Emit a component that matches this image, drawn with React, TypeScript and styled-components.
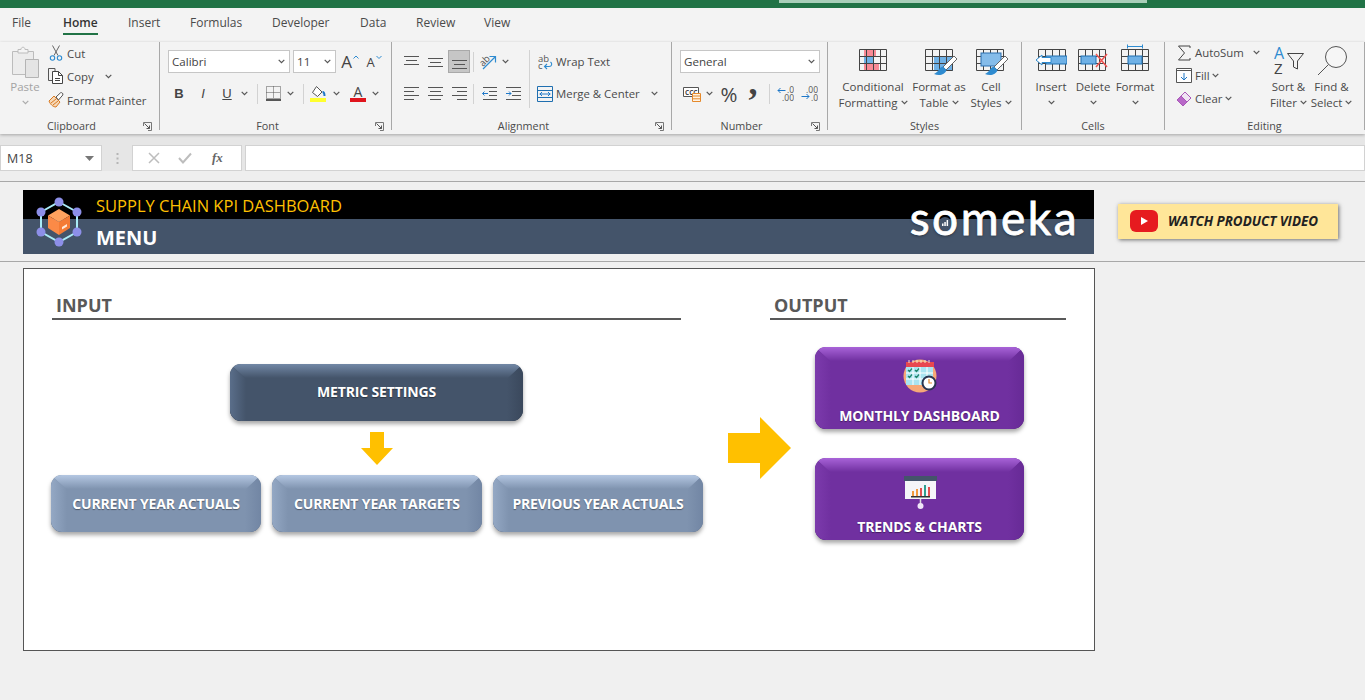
import React from "react";
import styled, { createGlobalStyle } from "styled-components";

const GlobalStyle = createGlobalStyle`
  html, body {
    margin: 0;
    height: 700px;
    overflow: hidden;
    background: #f0f0f0;
    font-family: "Open Sans", "Liberation Sans", sans-serif;
  }
  * { box-sizing: border-box; }
`;

const TitleBar = styled.div`
  height: 8px;
  background: #217346;
`;

const TitleSelection = styled.div`
  width: 368px;
  height: 3px;
  margin-left: 779px;
  background: #a9cfb9;
`;

const TabRow = styled.div`
  display: flex;
  height: 34px;
  padding-left: 12px;
  background: #f3f3f3;
`;

const Tab = styled.div<{ $w: number; $active?: boolean }>`
  width: ${(p) => p.$w}px;
  height: 34px;
  font-size: 12px;
  line-height: 30px;
  color: ${(p) => (p.$active ? "#333" : "#4a4a4a")};
  font-weight: ${(p) => (p.$active ? 600 : 400)};
  span {
    display: inline-block;
    height: 27px;
    border-bottom: ${(p) => (p.$active ? "2px solid #217346" : "0")};
  }
`;

const Ribbon = styled.div`
  position: relative;
  display: flex;
  height: 92px;
  background: #f3f3f3;
  box-shadow: 0 1px 3px rgba(0, 0, 0, 0.28);
`;

const Group = styled.div<{ $w: number }>`
  display: flex;
  flex-direction: column;
  flex: none;
  width: ${(p) => p.$w}px;
  height: 88px;
  border-right: 1px solid #a8a8a8;
`;

const GroupBody = styled.div<{ $pl?: number; $pt?: number }>`
  display: flex;
  flex: none;
  height: 76px;
  padding-left: ${(p) => p.$pl ?? 0}px;
  padding-top: ${(p) => p.$pt ?? 0}px;
`;

const GroupLabel = styled.div<{ $launcher?: boolean }>`
  display: grid;
  grid-template-columns: 1fr ${(p) => (p.$launcher ? "16px" : "0")};
  flex: none;
  height: 16px;
  align-items: center;
  font-size: 10.8px;
  line-height: 16px;
  color: #4a4a4a;
  text-align: center;
  svg { display: block; }
`;

const Stack = styled.div<{ $gap?: number; $w?: number }>`
  display: flex;
  flex-direction: column;
  flex: none;
  width: ${(p) => (p.$w ? `${p.$w}px` : "auto")};
  gap: ${(p) => p.$gap ?? 0}px;
`;

const Row = styled.div<{ $h?: number }>`
  display: flex;
  align-items: center;
  height: ${(p) => p.$h ?? 23}px;
`;

const Slot = styled.div<{ $w: number; $ml?: number }>`
  display: flex;
  align-items: center;
  justify-content: center;
  flex: none;
  width: ${(p) => p.$w}px;
  margin-left: ${(p) => p.$ml ?? 0}px;
  height: 100%;
  color: #444;
  svg { display: block; flex: none; }
`;

const SelectedSlot = styled(Slot)`
  height: 23px;
  margin: 0 1px;
  background: #c6c6c6;
  border: 1px solid #a9a9a9;
`;

const Sep = styled.div<{ $l: number; $r: number; $h?: number }>`
  flex: none;
  width: 1px;
  height: ${(p) => p.$h ?? 20}px;
  margin: 0 ${(p) => p.$r}px 0 ${(p) => p.$l}px;
  background: #d2d2d2;
`;

const Combo = styled.div<{ $w: number; $mr?: number }>`
  display: flex;
  align-items: center;
  justify-content: space-between;
  width: ${(p) => p.$w}px;
  height: 23px;
  margin-right: ${(p) => p.$mr ?? 0}px;
  padding: 0 4px 0 3px;
  background: #fff;
  border: 1px solid #c6c6c6;
  font-size: 11.6px;
  color: #444;
`;

const SmallText = styled.span<{ $ml?: number }>`
  font-size: 11.4px;
  color: #4a4a4a;
  white-space: nowrap;
  margin-left: ${(p) => p.$ml ?? 0}px;
  flex: none;
`;

const IconBox = styled.div<{ $w: number }>`
  display: flex;
  align-items: center;
  justify-content: center;
  flex: none;
  width: ${(p) => p.$w}px;
  svg { display: block; }
`;

const PasteButton = styled.div`
  display: flex;
  flex-direction: column;
  align-items: center;
  width: 34px;
  margin-right: 6px;
  padding-top: 4px;
  font-size: 11.5px;
  color: #a3a3a3;
  span { line-height: 16px; margin-top: 1px; }
  svg { display: block; }
  svg + span + svg { margin-top: 5px; }
`;

const BigButton = styled.div<{ $w: number }>`
  display: flex;
  flex-direction: column;
  align-items: center;
  flex: none;
  width: ${(p) => p.$w}px;
`;

const BigIcon = styled.div<{ $pt?: number; $pl?: number }>`
  display: flex;
  align-items: flex-start;
  justify-content: center;
  height: 36px;
  padding-top: ${(p) => p.$pt ?? 7}px;
  padding-left: ${(p) => p.$pl ?? 0}px;
  svg { display: block; }
`;

const BigLine = styled.div`
  display: flex;
  align-items: center;
  justify-content: center;
  gap: 3px;
  height: 16px;
  font-size: 11.5px;
  color: #4a4a4a;
  white-space: nowrap;
`;

const Glyph = styled.span<{ $weight?: number; $italic?: boolean; $u?: boolean }>`
  font-family: "Liberation Sans", sans-serif;
  font-size: 13px;
  font-weight: ${(p) => p.$weight ?? 400};
  font-style: ${(p) => (p.$italic ? "italic" : "normal")};
  text-decoration: ${(p) => (p.$u ? "underline" : "none")};
  color: #444;
`;

const PercentGlyph = styled.span`
  font-size: 20.500px;
  line-height: 20px;
  color: #444;
`;

const CommaGlyph = styled.span`
  font-family: "Liberation Serif", serif;
  font-size: 36px;
  font-weight: 700;
  line-height: 20px;
  margin-top: -24px;
  color: #444;
`;

const GrowGlyph = styled.div<{ $size: number }>`
  display: flex;
  align-items: flex-start;
  gap: 1px;
  font-size: ${(p) => p.$size}px;
  color: #444;
  line-height: 20px;
  svg { margin-top: 3px; }
`;

const FormulaBar = styled.div`
  display: flex;
  align-items: center;
  height: 48px;
  padding-top: 3px;
  background: linear-gradient(#e6e6e6 0 37px, #eeeeee 37px);
  border-bottom: 1px solid #a8a8a8;
`;

const NameBox = styled.div`
  display: flex;
  align-items: center;
  justify-content: space-between;
  width: 102px;
  height: 26px;
  padding: 0 7px 0 6px;
  margin-bottom: 2px;
  background: #fff;
  border: 1px solid #d2d2d2;
  font-size: 12.5px;
  color: #444;
`;

const GripDots = styled.div`
  width: 30px;
  display: flex;
  justify-content: center;
  margin-bottom: 2px;
`;

const FnBox = styled.div`
  display: flex;
  align-items: center;
  justify-content: space-around;
  width: 110px;
  height: 26px;
  padding: 0 6px;
  margin-right: 3px;
  margin-bottom: 2px;
  background: #fff;
  border: 1px solid #d2d2d2;
`;

const FormulaInput = styled.div`
  flex: 1;
  height: 26px;
  margin-bottom: 2px;
  background: #fff;
  border: 1px solid #d2d2d2;
`;

const HeaderStrip = styled.div`
  display: flex;
  align-items: flex-start;
  height: 80px;
  padding: 8px 0 0 23px;
  border-bottom: 1px solid #a8a8a8;
`;

const Banner = styled.div`
  display: flex;
  width: 1071px;
  height: 64px;
  background: linear-gradient(#000 0 29px, #44546a 29px);
`;

const LogoWrap = styled.div`
  flex: none;
  margin: 7px 13px 0 12px;
  svg { display: block; }
`;

const BannerTitles = styled.div`
  display: flex;
  flex-direction: column;
`;

const BannerTitle = styled.div`
  height: 29px;
  font-size: 16.500px;
  line-height: 32px;
  color: #ffc000;
  font-weight: 400;
  white-space: nowrap;
`;

const BannerMenu = styled.div`
  font-size: 20px;
  line-height: 37px;
  font-weight: 700;
  color: #fff;
`;

const Brand = styled.div`
  position: relative;
  margin: 1px 15px 0 auto;
  font-family: "Lato", sans-serif;
  font-size: 46px;
  line-height: 54px;
  font-weight: 400;
  letter-spacing: 2.500px;
  color: #fff;
  -webkit-text-stroke: 0.8px #fff;
  text-shadow: 0 1px 3px rgba(0, 0, 0, 0.45);
`;

const BrandDot = styled.svg`
  position: absolute;
  left: 29px;
  top: 26px;
`;

const VideoButton = styled.div`
  display: flex;
  align-items: center;
  width: 220px;
  height: 35px;
  margin: 14px 0 0 24px;
  padding: 0 0 1px 12px;
  background: #ffe699;
  box-shadow: 1px 1px 4px rgba(0, 0, 0, 0.55);
  svg { display: block; flex: none; }
`;

const VideoText = styled.span`
  margin-left: 10px;
  font-size: 13.400px;
  font-weight: 700;
  font-style: italic;
  color: #222;
  white-space: nowrap;
`;

const Sheet = styled.div`
  display: flex;
  width: 1072px;
  height: 383px;
  margin: 6px 0 0 23px;
  padding: 26px 0 0 27px;
  background: #fff;
  border: 1px solid #555;
`;

const InputColumn = styled.div`
  flex: none;
  display: flex;
  flex-direction: column;
  width: 652px;
`;

const OutputColumn = styled.div`
  flex: none;
  display: flex;
  flex-direction: column;
  width: 338px;
  margin-left: 25px;
`;

const Heading = styled.div<{ $w: number; $ml: number }>`
  width: ${(p) => p.$w}px;
  margin-left: ${(p) => p.$ml}px;
  height: 25px;
  padding-left: 4px;
  border-bottom: 2px solid #595959;
  font-size: 18px;
  line-height: 20px;
  font-weight: 700;
  color: #595959;
`;

const tones = {
  slate: {
    base: "#44546a",
    top: "#7288a6",
    left: "#5a6e8a",
    right: "#3a485c",
    bottom: "#2f3c4f",
  },
  steel: {
    base: "#7f93af",
    top: "#b4c7e2",
    left: "#94a8c4",
    right: "#7286a4",
    bottom: "#62748f",
  },
  purple: {
    base: "#7030a0",
    top: "#a863d8",
    left: "#7c3bac",
    right: "#672a96",
    bottom: "#54207f",
  },
};

type Tone = keyof typeof tones;

const BevelButton = styled.div<{ $tone: Tone; $h: number; $pt?: number; $pb?: number }>`
  position: relative;
  display: flex;
  flex-direction: column;
  align-items: center;
  justify-content: center;
  height: ${(p) => p.$h}px;
  padding-top: ${(p) => p.$pt ?? 0}px;
  padding-bottom: ${(p) => p.$pb ?? 0}px;
  border-radius: 11px;
  background: ${(p) => tones[p.$tone].base};
  box-shadow: 0 3px 4px rgba(0, 0, 0, 0.35),
    inset 0 -2px 3px ${(p) => tones[p.$tone].bottom};
  overflow: hidden;

  &::before {
    content: "";
    position: absolute;
    inset: 0;
    background: linear-gradient(${(p) => tones[p.$tone].top}, ${(p) => tones[p.$tone].base} 14px);
    clip-path: polygon(0 0, 100% 0, calc(100% - 16px) 15px, 16px 15px);
  }
  &::after {
    content: "";
    position: absolute;
    inset: 0;
    background: linear-gradient(
      90deg,
      ${(p) => tones[p.$tone].left},
      ${(p) => tones[p.$tone].base} 16px,
      ${(p) => tones[p.$tone].base} calc(100% - 16px),
      ${(p) => tones[p.$tone].right}
    );
    clip-path: polygon(0 0, 16px 15px, calc(100% - 16px) 15px, 100% 0, 100% 100%, 0 100%);
    border-radius: 11px;
  }
`;

const ButtonLabel = styled.span`
  position: relative;
  z-index: 1;
  font-size: 14px;
  line-height: 18px;
  font-weight: 700;
  letter-spacing: -0.150px;
  color: #fff;
  text-shadow: 0 1px 1px rgba(0, 0, 0, 0.4);
  white-space: nowrap;
`;

const ButtonIcon = styled.div`
  position: relative;
  z-index: 1;
  height: 39px;
  margin-bottom: 10px;
  svg { display: block; }
`;

const MetricWrap = styled.div`
  width: 293px;
  margin: 44px 0 0 179px;
`;

const DownArrowWrap = styled.div`
  display: flex;
  justify-content: center;
  margin: 11px 0 10px;
  svg { display: block; }
`;

const ActualsRow = styled.div`
  display: grid;
  grid-template-columns: repeat(3, 210px);
  gap: 11px;
`;

const OutputBody = styled.div`
  display: flex;
  align-items: center;
  gap: 24px;
  margin-top: 27px;
`;

const BigArrow = styled.svg`
  display: block;
  flex: none;
  margin-top: 8px;
`;

const OutputStack = styled.div`
  display: flex;
  flex-direction: column;
  gap: 29px;
  width: 209px;
`;

/* ---- small drawings ---- */

const Chev = ({ color = "#555" }: { color?: string }) => (
  <svg width="7" height="5" viewBox="0 0 7 5">
    <path d="M.7 .8 3.5 3.6 6.3 .8" fill="none" stroke={color} strokeWidth="1.2" />
  </svg>
);

const Launcher = () => (
  <svg width="9" height="9" viewBox="0 0 9 9">
    <path d="M.5 4V.5H8.500V8.500H5" fill="none" stroke="#777" />
    <path d="M1.500 1.500 6.500 6.500M6.500 3.500V6.500H3.500" fill="none" stroke="#555" />
  </svg>
);

const PasteIcon = () => (
  <svg width="28" height="32" viewBox="0 0 28 32">
    <path d="M1.500 5.500H22.500V28.500H1.500Z" fill="#ececec" stroke="#bcbcbc" />
    <path d="M7 7V3.500H10C10 .5 14 .5 14 3.500H17V7Z" fill="#f4f4f4" stroke="#bcbcbc" />
    <path d="M14.500 13.500H27.500V31.500H14.500Z" fill="#e4e4e4" stroke="#b4b4b4" />
  </svg>
);

const CutIcon = () => (
  <svg width="14" height="16" viewBox="0 0 14 16">
    <path d="M3.500 .5 9 10.500M10.500 .5 5 10.500" fill="none" stroke="#666" strokeWidth="1" />
    <circle cx="3.500" cy="13" r="2.200" fill="none" stroke="#2e8bd0" strokeWidth="1.100" />
    <circle cx="10.500" cy="13" r="2.200" fill="none" stroke="#2e8bd0" strokeWidth="1.100" />
  </svg>
);

const CopyIcon = () => (
  <svg width="16" height="16" viewBox="0 0 16 16">
    <path d="M4 12.500H.5V.5H7V3" fill="none" stroke="#555" />
    <path d="M4.500 3.500H10.500L14.500 7.500V15.500H4.500Z" fill="#fff" stroke="#444" />
    <path d="M10.500 3.500V7.500H14.500M7 10.500H12M7 12.500H12" fill="none" stroke="#444" />
  </svg>
);

const PainterIcon = () => (
  <svg width="16" height="16" viewBox="0 0 16 16">
    <path d="M1 9 6 4 12 10 8 15C5 15 2 12 1 9Z" fill="#f6d8b8" stroke="#d9791f" />
    <path d="M3 11 8 7M5 13 10 9" stroke="#d9791f" />
    <path d="M8 5 12.500 .8C13.500 0 15.500 1.500 14.800 3L10.500 8Z" fill="#fff" stroke="#555" />
  </svg>
);

const BordersIcon = () => (
  <svg width="15" height="15" viewBox="0 0 15 15">
    <path d="M.5 .5H14.500V12.500H.5ZM7.500 .5V12.500M.5 6.500H14.500" fill="none" stroke="#555" strokeDasharray="1 1" />
    <path d="M0 14H15" stroke="#222" strokeWidth="1.500" />
  </svg>
);

const FillIcon = () => (
  <svg width="17" height="17" viewBox="0 0 17 17">
    <path d="M6.500 1.500 12 7 7.500 11.500 2.500 7.500Z" fill="#fff" stroke="#555" />
    <path d="M12.500 7C14 7 14.500 9 14.500 11" fill="none" stroke="#1f78c8" strokeWidth="2" />
    <rect x="0" y="13" width="16" height="4" fill="#ffff2e" />
  </svg>
);

const FontColorIcon = () => (
  <svg width="16" height="16" viewBox="0 0 16 16">
    <text x="8" y="11" textAnchor="middle" fontFamily="Open Sans" fontSize="14" fill="#444">A</text>
    <rect x="0" y="12" width="16" height="4" fill="#e0141c" />
  </svg>
);

const Lines = ({ rows, w = 15, color = "#555" }: { rows: number[][]; w?: number; color?: string }) => (
  <svg width={w} height="15" viewBox={`0 0 ${w} 15`}>
    {rows.map(([x1, x2, y]) => (
      <path key={`${x1}-${y}`} d={`M${x1} ${y + 0.5}H${x2}`} stroke={color} />
    ))}
  </svg>
);

const OrientIcon = () => (
  <svg width="18" height="17" viewBox="0 0 18 17">
    <text x="0" y="11" fontFamily="Open Sans" fontSize="9.500" fill="#555" transform="rotate(-45 5 9)">ab</text>
    <path d="M3 16 15 4M9.500 3.500H15.500V9.500" fill="none" stroke="#2e8bd0" strokeWidth="1.200" />
  </svg>
);

const IndentIcon = ({ flip }: { flip?: boolean }) => (
  <svg width="15" height="15" viewBox="0 0 15 15">
    <path d={flip ? "M0 1.500H15M6 5.500H15M6 9.500H15M0 13.500H15" : "M1 1.500H15M7 5.500H15M7 9.500H15M1 13.500H15"} stroke="#555" />
    {flip ? (
      <path d="M0 7.500H5M3 5.500 5 7.500 3 9.500" fill="none" stroke="#1f78c8" />
    ) : (
      <path d="M6 7.500H0.500M2.500 5.500 .5 7.500 2.500 9.500" fill="none" stroke="#1f78c8" />
    )}
  </svg>
);

const WrapIcon = () => (
  <svg width="16" height="16" viewBox="0 0 16 16">
    <text x="1" y="7.500" fontFamily="Open Sans" fontSize="9.500" fill="#555">ab</text>
    <text x="1" y="15" fontFamily="Open Sans" fontSize="9.500" fill="#555">c</text>
    <path d="M13.500 8C15.500 9.500 15 12.500 12 12.500H7.500M10 10 7.500 12.500 10 15" fill="none" stroke="#2e8bd0" strokeWidth="1.100" />
  </svg>
);

const MergeIcon = () => (
  <svg width="16" height="16" viewBox="0 0 16 16">
    <path d="M.5 .5H15.500V15.500H.5ZM.5 4.500H15.500M.5 11.500H15.500" fill="none" stroke="#1f6fb0" />
    <path d="M2.500 8H13.500M5 6 3 8 5 10M11 6 13 8 11 10" fill="none" stroke="#1f78c8" />
  </svg>
);

const NumFormatIcon = () => (
  <svg width="18" height="16" viewBox="0 0 18 16">
    <path d="M.5 1.500H15.500V10.500H.5Z" fill="#fff" stroke="#555" />
    <text x="2" y="8.500" fontFamily="Open Sans" fontSize="6.500" fontWeight="700" fill="#444">CCC</text>
    <path d="M9.500 7.500H17.500V15.500H9.500ZM9.500 10H17.500M9.500 12.800H17.500" fill="#fff3e4" stroke="#e5892b" />
  </svg>
);

const DecimalIcon = ({ more }: { more?: boolean }) => (
  <svg width="17" height="17" viewBox="0 0 17 17">
    {more ? (
      <>
        <text x="17" y="7.500" textAnchor="end" fontFamily="Open Sans" fontSize="8.500" fill="#555">.00</text>
        <text x="17" y="16" textAnchor="end" fontFamily="Open Sans" fontSize="8.500" fill="#555">.0</text>
        <path d="M.5 11.500H8M5.500 9 8 11.500 5.500 14" fill="none" stroke="#1f78c8" />
      </>
    ) : (
      <>
        <text x="17" y="7.500" textAnchor="end" fontFamily="Open Sans" fontSize="8.500" fill="#555">.0</text>
        <text x="17" y="16" textAnchor="end" fontFamily="Open Sans" fontSize="8.500" fill="#555">.00</text>
        <path d="M1 5.500H8.500M3.500 3 1 5.500 3.500 8" fill="none" stroke="#1f78c8" />
      </>
    )}
  </svg>
);

const GRID_X = [0.5, 7.5, 14.5, 21.5, 27.5];
const GRID_Y = [0.5, 7.5, 14.5, 21.5];

const TableGrid = () => (
  <path
    d={
      GRID_X.map((x) => `M${x} .5V21.500`).join("") +
      GRID_Y.map((y) => `M.5 ${y}H27.500`).join("")
    }
    fill="none"
    stroke="#444"
  />
);

const Brush = () => (
  <>
    <path d="M29 7 32 10 21 21 18 18Z" fill="#fff" stroke="#666" />
    <path d="M18 17.500C14 18 14 23 9 25 14 27 20 26 21.500 21Z" fill="#2e8bd0" />
  </>
);

const CondFormatIcon = () => (
  <svg width="28" height="22" viewBox="0 0 28 22">
    <rect x="5" y="0" width="12" height="7" fill="#f88b96" />
    <rect x="5" y="7" width="9" height="7" fill="#6fb1e6" />
    <rect x="5" y="14" width="15" height="8" fill="#f88b96" />
    <TableGrid />
  </svg>
);

const FormatTableIcon = () => (
  <svg width="34" height="27" viewBox="0 0 34 27">
    <rect x="9" y="7" width="19" height="15" fill="#6fb1e6" />
    <TableGrid />
    <Brush />
  </svg>
);

const CellStylesIcon = () => (
  <svg width="34" height="27" viewBox="0 0 34 27">
    <TableGrid />
    <rect x="5" y="4" width="20" height="13" fill="#85bcea" stroke="#2a6fb0" />
    <Brush />
  </svg>
);

const InsertIcon = () => (
  <svg width="32" height="22" viewBox="0 0 32 22">
    <g transform="translate(3 0)">
      <TableGrid />
      <rect x="8" y="7" width="21" height="8" fill="#6fb1e6" stroke="#1f6fb0" />
    </g>
    <path d="M1 11 7 6V8.500H16V13.500H7V16Z" fill="#fff" stroke="#2e8bd0" />
  </svg>
);

const DeleteIcon = () => (
  <svg width="30" height="22" viewBox="0 0 30 22">
    <TableGrid />
    <rect x="3" y="7" width="15" height="8" fill="#6fb1e6" stroke="#1f6fb0" />
    <path d="M18 5 29 18M29 5 18 18" stroke="#ef5350" strokeWidth="1.500" />
  </svg>
);

const FormatCellIcon = () => (
  <svg width="28" height="27" viewBox="0 0 28 27">
    <path d="M6.500 2.500H21.500M6.500 .5V4.500M21.500 .5V4.500" stroke="#2e8bd0" />
    <g transform="translate(0 5)">
      <TableGrid />
      <rect x="7" y="7" width="14" height="8" fill="#6fb1e6" stroke="#1f6fb0" />
    </g>
  </svg>
);

const SigmaIcon = () => (
  <svg width="14" height="16" viewBox="0 0 14 16">
    <path d="M13 3V1H1.500L7.500 8 1.500 15H13V13" fill="none" stroke="#444" />
  </svg>
);

const FillDownIcon = () => (
  <svg width="16" height="15" viewBox="0 0 16 15">
    <path d="M.5 .5H15.500V14.500H.5Z" fill="#fff" stroke="#555" />
    <path d="M.5 2.500H15.500" stroke="#555" />
    <path d="M8 5V12M5 9 8 12 11 9" fill="none" stroke="#1f78c8" />
  </svg>
);

const EraserIcon = () => (
  <svg width="16" height="16" viewBox="0 0 16 16">
    <path d="M9 1 15 7 7 15 1 9Z" fill="#f0e4f4" stroke="#a958b8" />
    <path d="M1 9 5 5 11 11 7 15Z" fill="#b868c8" stroke="#a958b8" />
  </svg>
);

const SortIcon = () => (
  <svg width="30" height="30" viewBox="0 0 30 30">
    <text x="0" y="12" fontFamily="Open Sans" fontSize="16" fill="#2e8bd0">A</text>
    <text x="0" y="27" fontFamily="Open Sans" fontSize="15" fill="#444">Z</text>
    <path d="M13.500 6.500H29.500L23.500 14V22L19.500 20V14Z" fill="#f3f3f3" stroke="#444" />
  </svg>
);

const FindIcon = () => (
  <svg width="30" height="30" viewBox="0 0 30 30">
    <circle cx="19" cy="11" r="10.500" fill="#f6f6f6" stroke="#555" />
    <path d="M1 29 11.500 18.500" stroke="#555" />
  </svg>
);

const XMark = () => (
  <svg width="12" height="12" viewBox="0 0 12 12">
    <path d="M1 1 11 11M11 1 1 11" stroke="#bdbdbd" strokeWidth="1.500" />
  </svg>
);

const CheckMark = () => (
  <svg width="14" height="12" viewBox="0 0 14 12">
    <path d="M1 6 5 10.500 13 1.500" fill="none" stroke="#bdbdbd" strokeWidth="2" />
  </svg>
);

const FxMark = () => (
  <svg width="15" height="14" viewBox="0 0 15 14">
    <text x="1" y="11" fontFamily="Liberation Serif" fontStyle="italic" fontWeight="700" fontSize="13" fill="#666">fx</text>
  </svg>
);

const Grip = () => (
  <svg width="3" height="11" viewBox="0 0 3 11">
    <path d="M.5 0H2.500V2H.5ZM.5 4.500H2.500V6.500H.5ZM.5 9H2.500V11H.5Z" fill="#b5b5b5" />
  </svg>
);

const Caret = ({ down }: { down?: boolean }) => (
  <svg width="6" height="5" viewBox="0 0 6 5">
    <path d={down ? "M.5 1 3 3.500 5.500 1" : "M.5 3.500 3 1 5.500 3.500"} fill="none" stroke="#2e8bd0" />
  </svg>
);

const Logo = () => (
  <svg width="48" height="50" viewBox="0 0 48 50">
    <path d="M24 5 42 15V35L24 45 6 35V15Z" fill="none" stroke="#a9ecf7" strokeWidth="2" />
    <path d="M24 12 35 18.500 24 25 13 18.500Z" fill="#ffa25e" />
    <path d="M13 18.500 24 25V38L13 31Z" fill="#fb8a47" />
    <path d="M35 18.500 24 25V38L35 31Z" fill="#f47b35" />
    <path d="M27 30 32 27V29.500L27 32.500Z" fill="#ffe9d8" />
    {[[24, 5], [42, 15], [42, 35], [24, 45], [6, 35], [6, 15]].map(([cx, cy]) => (
      <circle key={`${cx}-${cy}`} cx={cx} cy={cy} r="4.500" fill="#8d8fe8" />
    ))}
  </svg>
);

const YouTube = () => (
  <svg width="28" height="22" viewBox="0 0 28 22">
    <rect x="0" y="0" width="28" height="22" rx="6" fill="#e61b1f" />
    <path d="M11 7 18 11 11 15Z" fill="#fff" />
  </svg>
);

const CalendarArt = () => (
  <svg width="34" height="36" viewBox="0 0 34 36">
    <circle cx="17" cy="18" r="16.500" fill="#f6a877" />
    <path d="M3 4H31V9H3Z" fill="#e8474f" />
    <path d="M6 2V5M10 2V5M14 2V5M18 2V5M22 2V5M26 2V5" stroke="#f8e2c8" strokeWidth="1" />
    <rect x="3" y="9" width="27" height="18" fill="#a9e3f0" />
    <path d="M10 9V27M17 9V27M24 9V27M3 15H30M3 21H30" stroke="#fff" />
    <path d="M5 12 6.500 13.500 9 10.500M12 12 13.500 13.500 16 10.500M5 18 6.500 19.500 9 16.500M12 18 13.500 19.500 16 16.500" fill="none" stroke="#21866b" strokeWidth="1.200" />
    <circle cx="26" cy="25" r="6.500" fill="#fff" stroke="#2a3550" strokeWidth="2" />
    <path d="M26 21V25H29" fill="none" stroke="#e5892b" strokeWidth="1.200" />
  </svg>
);

const BoardArt = () => (
  <svg width="34" height="41" viewBox="0 0 34 41">
    <rect x="1" y="7" width="33" height="5" fill="#44546a" />
    <rect x="2" y="12" width="31" height="18" fill="#f5f5f8" />
    <path d="M9 22H11V27H9ZM13 20H15V27H13Z" fill="#f19a3e" />
    <rect x="17" y="19" width="2" height="8" fill="#e25050" />
    <rect x="21" y="16" width="2" height="11" fill="#2f9f8f" />
    <rect x="25" y="18" width="2" height="9" fill="#e25050" />
    <rect x="8" y="27" width="19" height="1.500" fill="#333" />
    <path d="M17.500 30V36" stroke="#ddd" strokeWidth="1.500" />
    <circle cx="17.500" cy="37" r="3" fill="#efe6f7" />
  </svg>
);

const App = () => {
  return (
    <>
      <GlobalStyle />
      <TitleBar>
        <TitleSelection />
      </TitleBar>
      <TabRow>
        <Tab $w={51}>File</Tab>
        <Tab $w={65} $active><span>Home</span></Tab>
        <Tab $w={62}>Insert</Tab>
        <Tab $w={82}>Formulas</Tab>
        <Tab $w={88}>Developer</Tab>
        <Tab $w={56}>Data</Tab>
        <Tab $w={68}>Review</Tab>
        <Tab $w={50}>View</Tab>
      </TabRow>

      <Ribbon>
        <Group $w={160}>
          <GroupBody $pl={8}>
            <PasteButton>
              <PasteIcon />
              <span>Paste</span>
              <Chev color="#aaa" />
            </PasteButton>
            <Stack>
              <Row $h={22}><IconBox $w={16}><CutIcon /></IconBox><SmallText $ml={3}>Cut</SmallText></Row>
              <Row $h={24}>
                <IconBox $w={16}><CopyIcon /></IconBox><SmallText $ml={3}>Copy</SmallText>
                <Slot $w={18} $ml={6}><Chev /></Slot>
              </Row>
              <Row $h={24}><IconBox $w={16}><PainterIcon /></IconBox><SmallText $ml={3}>Format Painter</SmallText></Row>
            </Stack>
          </GroupBody>
          <GroupLabel $launcher>Clipboard<Launcher /></GroupLabel>
        </Group>

        <Group $w={232}>
          <GroupBody $pl={8} $pt={8}>
            <Stack $gap={9}>
              <Row>
                <Combo $w={122} $mr={3}>Calibri<Chev /></Combo>
                <Combo $w={43}>11<Chev /></Combo>
                <Slot $w={22} $ml={3}>
                  <GrowGlyph $size={17}>A<Caret /></GrowGlyph>
                </Slot>
                <Slot $w={26}>
                  <GrowGlyph $size={13}>A<Caret down /></GrowGlyph>
                </Slot>
              </Row>
              <Row>
                <Slot $w={22}><Glyph $weight={700}>B</Glyph></Slot>
                <Slot $w={2} />
                <Slot $w={22}><Glyph $italic>I</Glyph></Slot>
                <Slot $w={2} />
                <Slot $w={22}><Glyph $u>U</Glyph></Slot>
                <Slot $w={12}><Chev /></Slot>
                <Sep $l={7} $r={6} />
                <Slot $w={18}><BordersIcon /></Slot>
                <Slot $w={16}><Chev /></Slot>
                <Sep $l={5} $r={4} />
                <Slot $w={20}><FillIcon /></Slot>
                <Slot $w={16}><Chev /></Slot>
                <Slot $w={28}><FontColorIcon /></Slot>
                <Slot $w={6}><Chev /></Slot>
              </Row>
            </Stack>
          </GroupBody>
          <GroupLabel $launcher>Font<Launcher /></GroupLabel>
        </Group>

        <Group $w={280}>
          <GroupBody $pl={7} $pt={8}>
            <Stack $gap={9}>
              <Row>
                <Slot $w={24}><Lines rows={[[0, 15, 2], [2, 13, 6], [0, 15, 10]]} /></Slot>
                <Slot $w={24}><Lines rows={[[0, 15, 4], [2, 13, 8], [0, 15, 12]]} /></Slot>
                <SelectedSlot $w={22}><Lines rows={[[0, 15, 6], [2, 13, 10], [0, 15, 14]]} /></SelectedSlot>
                <Sep $l={2} $r={3} />
                <Slot $w={24}><OrientIcon /></Slot>
                <Slot $w={8}><Chev /></Slot>
              </Row>
              <Row>
                <Slot $w={24}><Lines rows={[[0, 15, 1], [0, 10, 5], [0, 15, 9], [0, 10, 13]]} /></Slot>
                <Slot $w={24}><Lines rows={[[0, 15, 1], [2, 13, 5], [0, 15, 9], [2, 13, 13]]} /></Slot>
                <Slot $w={24}><Lines rows={[[0, 15, 1], [5, 15, 5], [0, 15, 9], [5, 15, 13]]} /></Slot>
                <Sep $l={2} $r={3} />
                <Slot $w={24}><IndentIcon /></Slot>
                <Slot $w={24}><IndentIcon flip /></Slot>
              </Row>
            </Stack>
            <Sep $l={4} $r={7} $h={58} />
            <Stack $gap={9}>
              <Row>
                <IconBox $w={16}><WrapIcon /></IconBox>
                <SmallText $ml={3}>Wrap Text</SmallText>
              </Row>
              <Row>
                <IconBox $w={16}><MergeIcon /></IconBox>
                <SmallText $ml={3}>Merge &amp; Center</SmallText>
                <Slot $w={10} $ml={10}><Chev /></Slot>
              </Row>
            </Stack>
          </GroupBody>
          <GroupLabel $launcher>Alignment<Launcher /></GroupLabel>
        </Group>

        <Group $w={156}>
          <GroupBody $pl={8} $pt={8}>
            <Stack $gap={9}>
              <Row><Combo $w={140}>General<Chev /></Combo></Row>
              <Row>
                <Slot $w={23}><NumFormatIcon /></Slot>
                <Slot $w={12}><Chev /></Slot>
                <Slot $w={28}><PercentGlyph>%</PercentGlyph></Slot>
                <Slot $w={20}><CommaGlyph>,</CommaGlyph></Slot>
                <Sep $l={6} $r={7} />
                <Slot $w={17}><DecimalIcon /></Slot>
                <Slot $w={7} />
                <Slot $w={17}><DecimalIcon more /></Slot>
              </Row>
            </Stack>
          </GroupBody>
          <GroupLabel $launcher>Number<Launcher /></GroupLabel>
        </Group>

        <Group $w={194}>
          <GroupBody $pl={10}>
            <BigButton $w={70}>
              <BigIcon><CondFormatIcon /></BigIcon>
              <BigLine>Conditional</BigLine>
              <BigLine>Formatting<Chev /></BigLine>
            </BigButton>
            <BigButton $w={62}>
              <BigIcon $pl={5}><FormatTableIcon /></BigIcon>
              <BigLine>Format as</BigLine>
              <BigLine>Table<Chev /></BigLine>
            </BigButton>
            <BigButton $w={42}>
              <BigIcon $pl={3}><CellStylesIcon /></BigIcon>
              <BigLine>Cell</BigLine>
              <BigLine>Styles<Chev /></BigLine>
            </BigButton>
          </GroupBody>
          <GroupLabel>Styles</GroupLabel>
        </Group>

        <Group $w={143}>
          <GroupBody $pl={8}>
            <BigButton $w={42}>
              <BigIcon><InsertIcon /></BigIcon>
              <BigLine>Insert</BigLine>
              <BigLine><Chev /></BigLine>
            </BigButton>
            <BigButton $w={42}>
              <BigIcon><DeleteIcon /></BigIcon>
              <BigLine>Delete</BigLine>
              <BigLine><Chev /></BigLine>
            </BigButton>
            <BigButton $w={42}>
              <BigIcon $pt={2}><FormatCellIcon /></BigIcon>
              <BigLine>Format</BigLine>
              <BigLine><Chev /></BigLine>
            </BigButton>
          </GroupBody>
          <GroupLabel>Cells</GroupLabel>
        </Group>

        <Group $w={200}>
          <GroupBody $pl={11}>
            <Stack $w={91}>
              <Row $h={21}>
                <IconBox $w={16}><SigmaIcon /></IconBox>
                <SmallText $ml={3}>AutoSum</SmallText>
                <Slot $w={10} $ml={8}><Chev /></Slot>
              </Row>
              <Row $h={24}>
                <IconBox $w={16}><FillDownIcon /></IconBox>
                <SmallText $ml={3}>Fill</SmallText>
                <Slot $w={10} $ml={1}><Chev /></Slot>
              </Row>
              <Row>
                <IconBox $w={16}><EraserIcon /></IconBox>
                <SmallText $ml={3}>Clear</SmallText>
                <Slot $w={10} $ml={1}><Chev /></Slot>
              </Row>
            </Stack>
            <BigButton $w={43}>
              <BigIcon $pt={5}><SortIcon /></BigIcon>
              <BigLine>Sort &amp;</BigLine>
              <BigLine>Filter<Chev /></BigLine>
            </BigButton>
            <BigButton $w={43}>
              <BigIcon $pt={4}><FindIcon /></BigIcon>
              <BigLine>Find &amp;</BigLine>
              <BigLine>Select<Chev /></BigLine>
            </BigButton>
          </GroupBody>
          <GroupLabel>Editing</GroupLabel>
        </Group>
      </Ribbon>

      <FormulaBar>
        <NameBox>M18<svg width="9" height="5" viewBox="0 0 9 5"><path d="M0 0H9L4.500 5Z" fill="#777" /></svg></NameBox>
        <GripDots><Grip /></GripDots>
        <FnBox><XMark /><CheckMark /><FxMark /></FnBox>
        <FormulaInput />
      </FormulaBar>

      <HeaderStrip>
        <Banner>
          <LogoWrap><Logo /></LogoWrap>
          <BannerTitles>
            <BannerTitle>SUPPLY CHAIN KPI DASHBOARD</BannerTitle>
            <BannerMenu>MENU</BannerMenu>
          </BannerTitles>
          <Brand>
            someka
            <BrandDot width="12" height="12" viewBox="0 0 12 12">
              <circle cx="6" cy="6" r="6" fill="#44546a" />
              <path d="M3 6.500H4.500V9H3ZM5.300 5H6.800V9H5.300ZM7.600 3H9.100V9H7.600Z" fill="#fff" />
            </BrandDot>
          </Brand>
        </Banner>
        <VideoButton>
          <YouTube />
          <VideoText>WATCH PRODUCT VIDEO</VideoText>
        </VideoButton>
      </HeaderStrip>

      <Sheet>
        <InputColumn>
          <Heading $w={629} $ml={1}>INPUT</Heading>
          <MetricWrap>
            <BevelButton $tone="slate" $h={57} $pb={2}><ButtonLabel>METRIC SETTINGS</ButtonLabel></BevelButton>
          </MetricWrap>
          <DownArrowWrap>
            <svg width="32" height="33" viewBox="0 0 32 33">
              <path d="M9 0H23V16H32L16 33 0 16H9Z" fill="#ffc000" />
            </svg>
          </DownArrowWrap>
          <ActualsRow>
            <BevelButton $tone="steel" $h={57}><ButtonLabel>CURRENT YEAR ACTUALS</ButtonLabel></BevelButton>
            <BevelButton $tone="steel" $h={57}><ButtonLabel>CURRENT YEAR TARGETS</ButtonLabel></BevelButton>
            <BevelButton $tone="steel" $h={57}><ButtonLabel>PREVIOUS YEAR ACTUALS</ButtonLabel></BevelButton>
          </ActualsRow>
        </InputColumn>

        <OutputColumn>
          <Heading $w={296} $ml={42}>OUTPUT</Heading>
          <OutputBody>
            <BigArrow width="63" height="62" viewBox="0 0 63 62">
              <path d="M0 16H32V0L63 31 32 62V46H0Z" fill="#ffc000" />
            </BigArrow>
            <OutputStack>
              <BevelButton $tone="purple" $h={82} $pt={6}>
                <ButtonIcon><CalendarArt /></ButtonIcon>
                <ButtonLabel>MONTHLY DASHBOARD</ButtonLabel>
              </BevelButton>
              <BevelButton $tone="purple" $h={82} $pt={6}>
                <ButtonIcon><BoardArt /></ButtonIcon>
                <ButtonLabel>TRENDS &amp; CHARTS</ButtonLabel>
              </BevelButton>
            </OutputStack>
          </OutputBody>
        </OutputColumn>
      </Sheet>
    </>
  );
};

export default App;
